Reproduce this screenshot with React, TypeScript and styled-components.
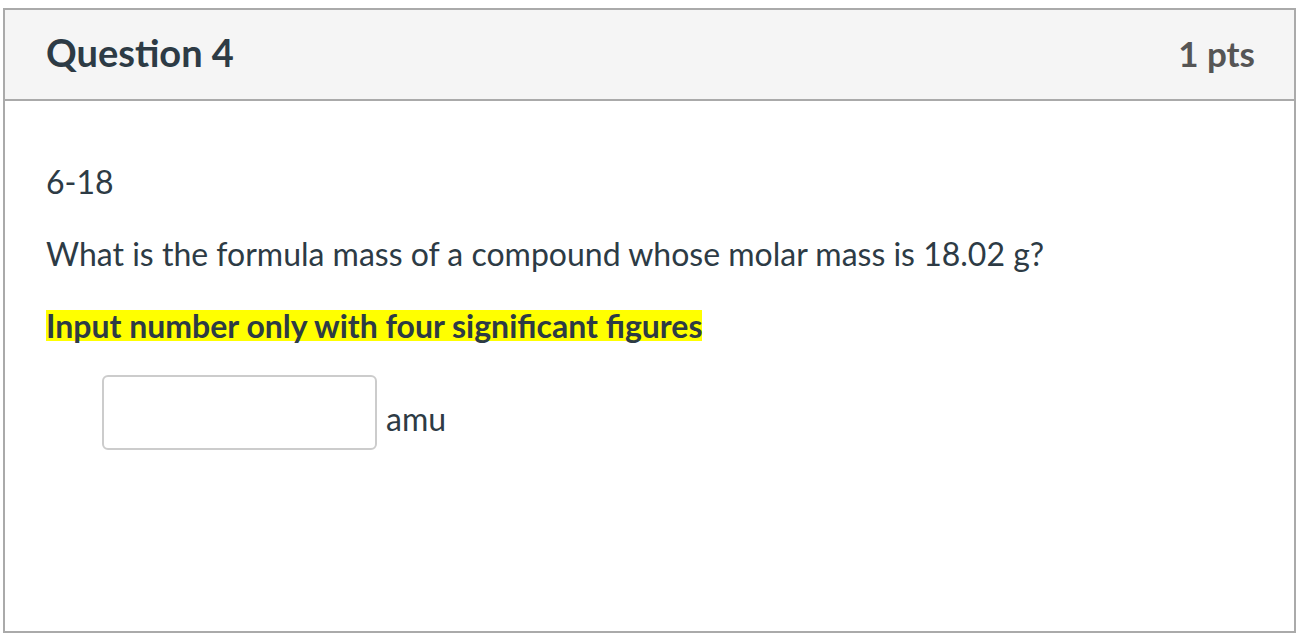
import React from "react";
import styled, { createGlobalStyle } from "styled-components";

const Global = createGlobalStyle`
  html, body { margin: 0; padding: 0; background: #ffffff; }
  body { font-family: Lato, "Open Sans", sans-serif; color: #2d3b45; }
`;

const Page = styled.div`
  padding: 8px 16px 0 3px;
`;

const Card = styled.section`
  border: 2px solid #aaaaaa;
  height: 625px;
  box-sizing: border-box;
  display: flex;
  flex-direction: column;
`;

const Header = styled.header`
  height: 91px;
  box-sizing: border-box;
  background: #f5f5f5;
  border-bottom: 2px solid #aaaaaa;
  display: flex;
  align-items: center;
  justify-content: space-between;
  padding: 0 39px 4px 41px;
`;

const Title = styled.h2`
  margin: 0;
  font-size: 38px;
  line-height: 1.2;
  font-weight: 700;
  color: #2d3b45;
`;

const Points = styled.div`
  font-size: 35px;
  line-height: 1.2;
  font-weight: 700;
  color: #555555;
`;

const Body = styled.div`
  padding: 62px 41px 0 41px;
`;

const Para = styled.p<{ $gap: number }>`
  margin: 0 0 ${(p) => p.$gap}px 0;
  font-size: 32px;
  line-height: 1.2;
`;

const Highlight = styled.span`
  background: #ffff00;
  font-weight: 700;
  display: inline-block;
  line-height: 31px;
`;

const AnswerRow = styled.div`
  display: flex;
  align-items: flex-end;
  padding-left: 56px;
  gap: 9px;
`;

const Field = styled.input`
  width: 275px;
  height: 75px;
  box-sizing: border-box;
  border: 2px solid #cccccc;
  border-radius: 6px;
  background: #fff;
  outline: none;
`;

const Unit = styled.span`
  font-size: 32px;
  line-height: 1.2;
  margin-bottom: 12px;
`;

export default function App() {
  return (
    <>
      <Global />
      <Page>
        <Card>
          <Header>
            <Title>Question 4</Title>
            <Points>1 pts</Points>
          </Header>
          <Body>
            <Para $gap={34}>6-18</Para>
            <Para $gap={33}>What is the formula mass of a compound whose molar mass is 18.02 g?</Para>
            <Para $gap={30}>
              <Highlight>Input number only with four significant figures</Highlight>
            </Para>
            <AnswerRow>
              <Field type="text" aria-label="answer" />
              <Unit>amu</Unit>
            </AnswerRow>
          </Body>
        </Card>
      </Page>
    </>
  );
}
